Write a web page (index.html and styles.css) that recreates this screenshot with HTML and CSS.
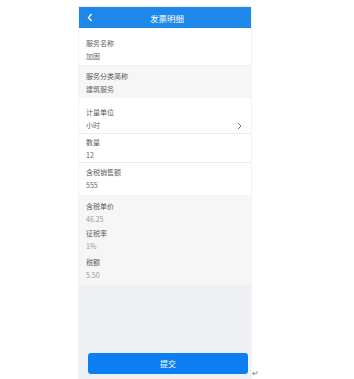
FILE: index.html
```html
<!DOCTYPE html>
<html lang="zh">
<head>
    <meta charset="UTF-8">
    <meta name="viewport" content="width=device-width, initial-scale=1.0">
    <title>发票明细</title>
    <link rel="stylesheet" href="styles.css">
</head>
<body>
    <div class="wrap">
        <div class="phone">
            <div class="header">
                <svg class="back" width="6" height="9" viewBox="0 0 6 9">
                    <path d="M4.5 1 L1.5 4.5 L4.5 8" fill="none" stroke="#fff" stroke-width="1.4"/>
                </svg>
                <span class="title">发票明细</span>
            </div>

            <div class="row r1">
                <div class="label">服务名称</div>
                <div class="value">加固</div>
            </div>
            <div class="row r2 shaded">
                <div class="label">服务分类简称</div>
                <div class="value">建筑服务</div>
            </div>
            <div class="row r3">
                <div class="label">计量单位</div>
                <div class="value">小时</div>
                <svg class="arrow" width="5" height="8" viewBox="0 0 5 8">
                    <path d="M1 1 L4 4 L1 7" fill="none" stroke="#777" stroke-width="1"/>
                </svg>
            </div>
            <div class="row r4">
                <div class="label">数量</div>
                <div class="value">12</div>
            </div>
            <div class="row r5">
                <div class="label">含税销售额</div>
                <div class="value">555</div>
            </div>

            <div class="calc">
                <div class="item i1">
                    <div class="label">含税单价</div>
                    <div class="value">46.25</div>
                </div>
                <div class="item i2">
                    <div class="label">征税率</div>
                    <div class="value">1%</div>
                </div>
                <div class="item i3">
                    <div class="label">税额</div>
                    <div class="value">5.50</div>
                </div>
            </div>

            <div class="footer">
                <button class="submit">提交</button>
            </div>
        </div>
        <span class="mark">↵</span>
    </div>
</body>
</html>
```

FILE: styles.css
```css
body {
    margin: 0;
    font-family: "Noto Sans CJK SC", "Noto Sans", sans-serif;
    background: #fff;
}

.wrap {
    display: flex;
    align-items: flex-end;
    padding: 7px 0 0 79px;
}

.phone {
    width: 172px;
    height: 372px;
    display: flex;
    flex-direction: column;
    box-shadow: 0 0 0 1px #f3f3f3;
    background: #fff;
}

.header {
    position: relative;
    height: 21px;
    background: #1d88ea;
    display: flex;
    align-items: center;
    justify-content: center;
}

.back {
    position: absolute;
    left: 8px;
    top: 6px;
}

.title {
    color: #fff;
    font-size: 8.5px;
    margin-left: 4px;
}

.row {
    position: relative;
    padding: 3px 7px 0;
    border-bottom: 1px solid #eeeeee;
}

.label,
.value {
    font-size: 7px;
    line-height: 13px;
    color: #5a5a5a;
}

.value {
    color: #666;
}

.r1 {
    padding-top: 9px;
    padding-bottom: 2px;
}

.r2 {
    padding-top: 4px;
    padding-bottom: 2px;
    border-bottom: none;
}

.shaded {
    background: #f6f6f6;
}

.r3 {
    padding-top: 8px;
    padding-bottom: 1px;
}

.r4 {
    padding-top: 2px;
}

.r5 {
    padding-top: 3px;
    padding-bottom: 3px;
    border-bottom: none;
}

.arrow {
    position: absolute;
    right: 9px;
    top: 24px;
}

.calc {
    background: #f6f6f6;
    padding: 0 7px 3px;
}

.calc .value {
    color: #999;
}

.i1 {
    padding-top: 5px;
}

.i2 {
    padding-top: 1px;
}

.i3 {
    padding-top: 3px;
}

.footer {
    flex: 1;
    background: #eef0f3;
    display: flex;
    align-items: flex-end;
    padding: 0 3px 5px 9px;
}

.submit {
    width: 160px;
    height: 21px;
    border: none;
    border-radius: 3px;
    background: #0d7ef2;
    color: #fff;
    font-family: inherit;
    font-size: 8px;
    padding: 0;
}

.mark {
    font-size: 8px;
    line-height: 8px;
    color: #777;
    margin-left: 1px;
    margin-bottom: 2px;
}
```
